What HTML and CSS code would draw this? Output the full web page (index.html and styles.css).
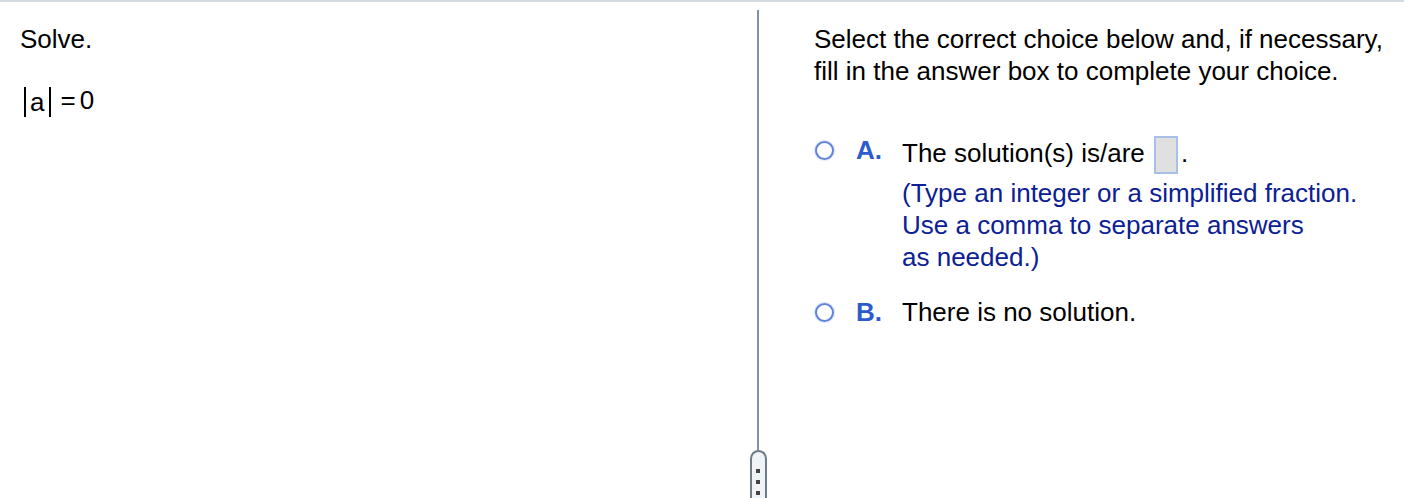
FILE: index.html
```html
<!DOCTYPE html>
<html lang="en">
<head>
    <meta charset="UTF-8">
    <title>Solve</title>
    <link rel="stylesheet" href="styles.css">
</head>
<body>
    <div class="question">
        <div class="stem">
            <p class="prompt">Solve.</p>
            <p class="equation"><span class="abs">a</span><span class="eq">=</span><span class="rhs">0</span></p>
        </div>

        <div class="divider">
            <div class="handle">
                <span></span><span></span><span></span>
            </div>
        </div>

        <div class="answer">
            <p class="instructions">Select the correct choice below and, if necessary, fill in the answer box to complete your choice.</p>

            <div class="choice choice-a">
                <span class="radio"></span>
                <span class="letter">A.</span>
                <div class="choice-body">
                    <div class="choice-text">The solution(s) is/are <span class="answer-box"></span>.</div>
                    <div class="hint">(Type an integer or a simplified fraction.<br>Use a comma to separate answers<br>as needed.)</div>
                </div>
            </div>

            <div class="choice choice-b">
                <span class="radio"></span>
                <span class="letter">B.</span>
                <div class="choice-body">
                    <div class="choice-text">There is no solution.</div>
                </div>
            </div>
        </div>
    </div>
</body>
</html>
```

FILE: styles.css
```css
* {
    margin: 0;
    padding: 0;
    box-sizing: border-box;
}

body {
    font-family: 'Liberation Sans', Arial, sans-serif;
    font-size: 26px;
    line-height: 32px;
    color: #000;
    background: #fff;
    border-top: 2px solid #d3dbe3;
    height: 498px;
    overflow: hidden;
}

.question {
    display: flex;
    height: 496px;
}

.stem {
    width: 750px;
    padding: 21px 0 0 20px;
}

.prompt {
    margin-bottom: 29px;
}

.abs {
    display: inline-block;
    margin-left: 4px;
    padding: 0 5px 0 4px;
    border-left: 2px solid #000;
    border-right: 2px solid #000;
    line-height: 30px;
    vertical-align: middle;
}

.eq {
    margin-left: 9px;
}

.rhs {
    margin-left: 4px;
}

.divider {
    width: 18px;
    margin-top: 8px;
    display: flex;
    flex-direction: column;
    align-items: center;
}

.divider::before {
    content: '';
    flex: 1;
    width: 2px;
    background: #8393a4;
}

.handle {
    width: 17px;
    height: 52px;
    margin-bottom: -4px;
    border: 2px solid #6e7b88;
    border-bottom: none;
    border-radius: 9px 9px 0 0;
    background: #f1f4f6;
    display: flex;
    flex-direction: column;
    align-items: center;
    padding-top: 17px;
    gap: 7px;
}

.handle span {
    width: 4px;
    height: 4px;
    background: #444;
}

.answer {
    flex: 1;
    padding: 21px 0 0 47px;
}

.instructions {
    width: 590px;
}

.choice {
    display: flex;
    align-items: flex-start;
}

.choice-a {
    margin-top: 50px;
}

.choice-b {
    margin-top: 23px;
}

.radio {
    flex-shrink: 0;
    width: 19px;
    height: 19px;
    margin: 4px 0 0 1px;
    border: 2px solid #5f84dc;
    border-radius: 50%;
    box-shadow: 0 0 2px rgba(70, 110, 220, 0.6);
}

.letter {
    width: 46px;
    margin-left: 22px;
    color: #2c5bcc;
    font-weight: bold;
}

.choice-a .letter {
    line-height: 26px;
}

.choice-b .radio {
    margin-top: 7px;
}

.choice-body {
    width: 480px;
}

.answer-box {
    display: inline-block;
    width: 24px;
    height: 38px;
    margin: -3px 3px -3px 2px;
    background: #e0e0e0;
    border: 2px solid #a6c0ea;
    vertical-align: middle;
}

.hint {
    margin-top: 6px;
    color: #0b2094;
}
```
